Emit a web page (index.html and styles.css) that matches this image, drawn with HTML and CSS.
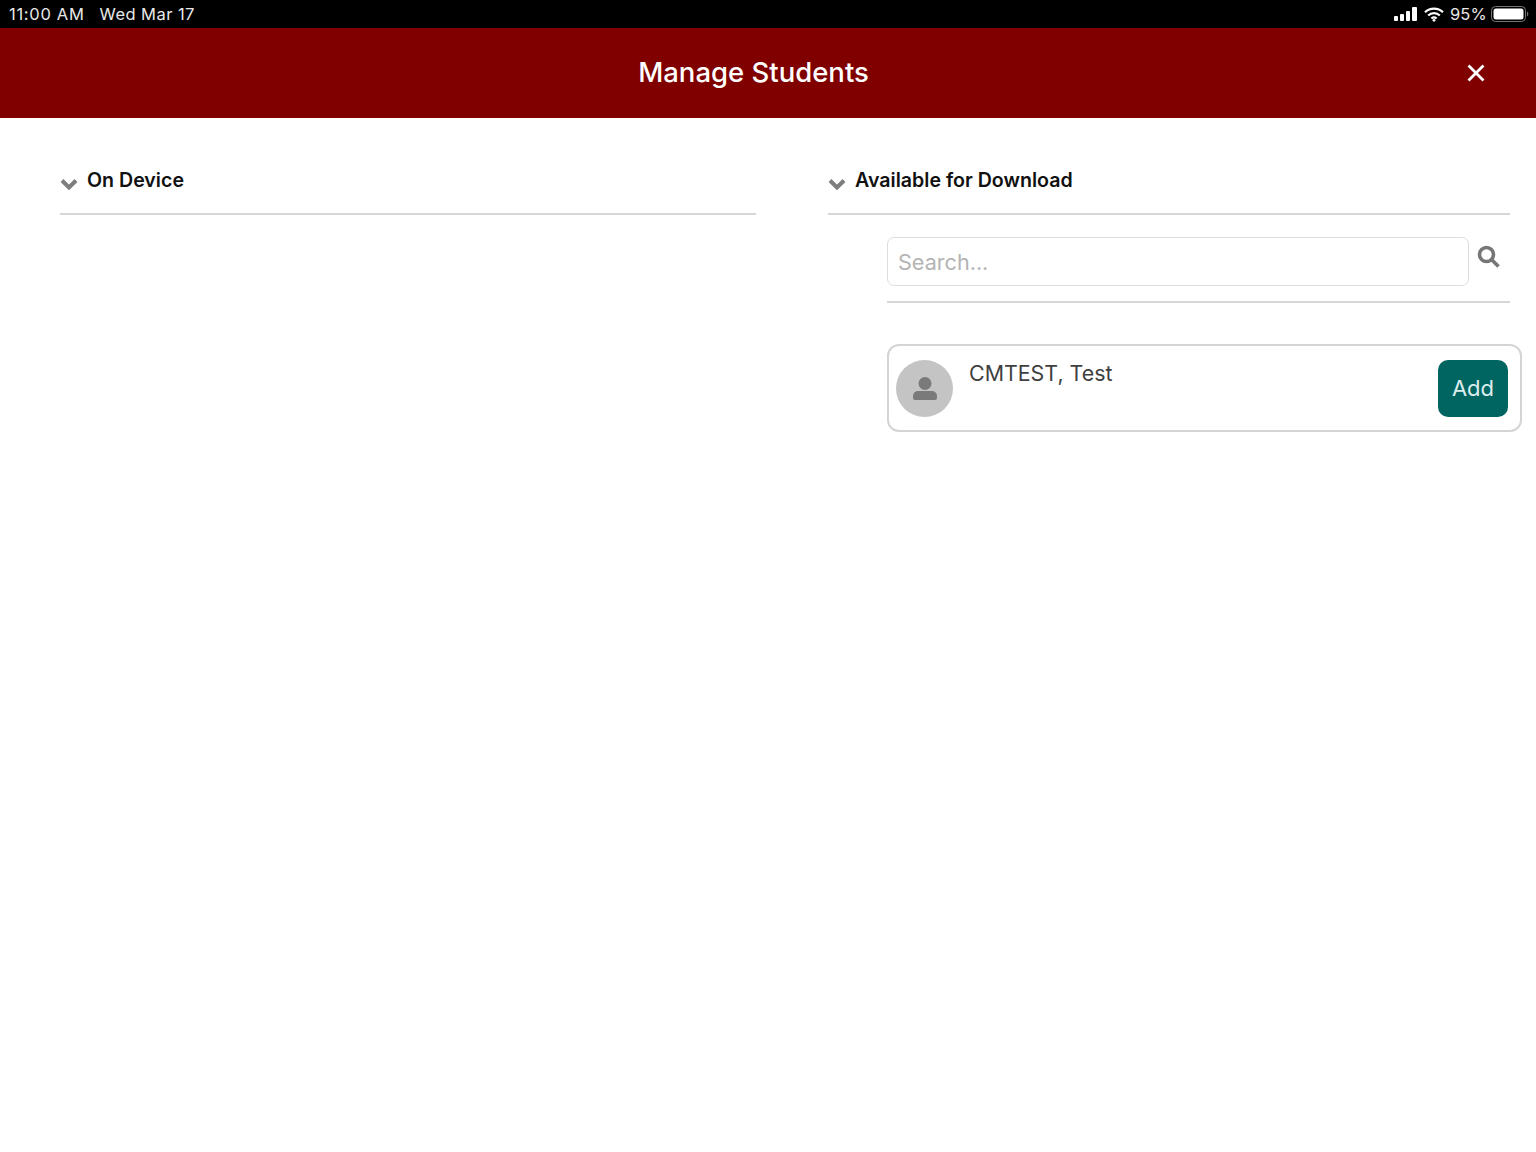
FILE: index.html
```html
<!DOCTYPE html>
<html lang="en">
<head>
<meta charset="utf-8">
<title>Manage Students</title>
<link rel="stylesheet" href="styles.css">
</head>
<body>
<div class="status">
  <div class="status-left"><span class="time">11:00 AM</span><span class="date">Wed Mar 17</span></div>
  <div class="status-right">
    <svg class="signal" width="24" height="14" viewBox="0 0 24 14"><rect x="0" y="9" width="4" height="5" rx="1"/><rect x="6" y="7" width="4" height="7" rx="1"/><rect x="12" y="4" width="4" height="10" rx="1"/><rect x="18" y="0" width="5" height="14" rx="1"/></svg>
    <svg class="wifi" width="20" height="15" viewBox="0 0 20 15"><path d="M1 5.200a13 13 0 0 1 18 0" /><path d="M4.200 8.500a8.500 8.500 0 0 1 11.600 0"/><path d="M7.400 11.500a4 4 0 0 1 5.200 0"/><circle cx="10" cy="13.300" r="1.400"/></svg>
    <span class="pct">95%</span>
    <svg class="battery" width="38" height="16" viewBox="0 0 38 16"><rect x="0.500" y="0.500" width="34" height="15" rx="4" class="b-out"/><rect x="2.500" y="2.500" width="30" height="11" rx="2.500" class="b-in"/><path d="M36 5.500a3 3 0 0 1 0 5z" class="b-tip"/></svg>
  </div>
</div>
<header class="topbar">
  <h1>Manage Students</h1>
  <svg class="close" width="18" height="18" viewBox="0 0 18 18"><path d="M1.500 1.500l15 15M16.500 1.500l-15 15"/></svg>
</header>
<main class="columns">
  <section class="col col-left">
    <div class="col-head">
      <svg class="chev" width="18" height="12" viewBox="0 0 18 12"><path d="M2 2.500L9 9.500l7-7"/></svg>
      <h2>On Device</h2>
    </div>
  </section>
  <section class="col col-right">
    <div class="col-head">
      <svg class="chev" width="18" height="12" viewBox="0 0 18 12"><path d="M2 2.500L9 9.500l7-7"/></svg>
      <h2>Available for Download</h2>
    </div>
    <div class="inner">
      <div class="search-row">
        <input class="search" type="text" placeholder="Search...">
        <svg class="mag" width="24" height="24" viewBox="0 0 24 24"><circle cx="9.500" cy="9.500" r="7"/><path d="M14.500 14.500L21.500 21.500"/></svg>
      </div>
      <div class="card">
        <div class="avatar">
          <svg width="24" height="24" viewBox="0 0 24 24"><circle cx="12" cy="6.500" r="6.500"/><path d="M0 21v-2a5 5 0 0 1 5-5h14a5 5 0 0 1 5 5v2a2 2 0 0 1-2 2H2a2 2 0 0 1-2-2z"/></svg>
        </div>
        <div class="name">CMTEST, Test</div>
        <button class="add" type="button">Add</button>
      </div>
    </div>
  </section>
</main>
</body>
</html>
```
FILE: styles.css
```css
* { box-sizing: border-box; }
html, body { margin: 0; padding: 0; background: #fff; }
body { font-family: Inter, "Liberation Sans", sans-serif; height: 1152px; overflow: hidden; }

.status { height: 28px; background: #000; color: #e8e8e8; display: flex; justify-content: space-between; align-items: center; padding: 0 7px 0 9px; font-size: 16.5px; }
.status-left { display: flex; gap: 15px; }
.time { letter-spacing: 0.7px; }
.date { letter-spacing: 0.45px; }
.status-right { display: flex; align-items: center; }
.signal { fill: #fff; margin-right: 6px; }
.wifi { margin-right: 6px; }
.wifi path { fill: none; stroke: #fff; stroke-width: 2.200; }
.wifi circle { fill: #fff; }
.pct { margin-right: 4px; letter-spacing: 0.2px; }
.b-out { fill: none; stroke: #777; }
.b-in { fill: #fff; }
.b-tip { fill: #777; }

.topbar { height: 90px; background: #800000; color: #fff; display: flex; align-items: center; justify-content: center; position: relative; padding-right: 29px; }
.topbar h1 { margin: 0 0 3px; font-size: 27.500px; font-weight: 500; letter-spacing: 0; }
.close { position: absolute; right: 51px; top: 36px; }
.close path { stroke: #fff; stroke-width: 2.800; fill: none; }

.columns { display: flex; gap: 72px; padding: 0 26px 0 60px; }
.col-left { width: 696px; }
.col-right { width: 682px; }
.col-head { height: 97px; padding: 50px 0 0 0; display: flex; align-items: flex-start; border-bottom: 2px solid #d6d6d6; }
.col-head h2 { margin: 0; font-size: 19.600px; line-height: 25px; font-weight: 600; color: #111; letter-spacing: 0; }
.chev { margin: 10px 9px 0 0; flex: none; }
.chev path { fill: none; stroke: #7d7d7d; stroke-width: 4; }

.inner { margin-left: 59px; width: 635px; }
.search-row { width: 623px; height: 88px; padding-top: 22px; display: flex; align-items: flex-start; border-bottom: 2px solid #d6d6d6; }
.search { width: 582px; height: 49px; border: 1px solid #dedede; border-radius: 7px; padding: 0 10px; font: 400 21.600px Inter, "Liberation Sans", sans-serif; outline: none; background: #fff; }
.search::placeholder { color: #b4b4b4; opacity: 1; }
.mag { margin: 8px 0 0 8px; flex: none; }
.mag circle, .mag path { fill: none; stroke: #777; stroke-width: 3.600; }

.card { margin-top: 41px; height: 88px; border: 2px solid #d4d4d4; border-radius: 12px; display: flex; align-items: flex-start; padding: 14px 12px 0 7px; }
.avatar { width: 57px; height: 57px; border-radius: 50%; background: #c4c4c4; display: flex; align-items: center; justify-content: center; flex: none; }
.avatar svg { fill: #7a7a7a; }
.name { margin: -1px 0 0 16px; flex: 1; font-size: 21.400px; line-height: 28px; color: #3f3f3f; }
.add { width: 70px; height: 57px; border: none; border-radius: 10px; background: #006460; color: #dceeee; font: 400 22px Inter, "Liberation Sans", sans-serif; padding: 0 0 2px; }
```
